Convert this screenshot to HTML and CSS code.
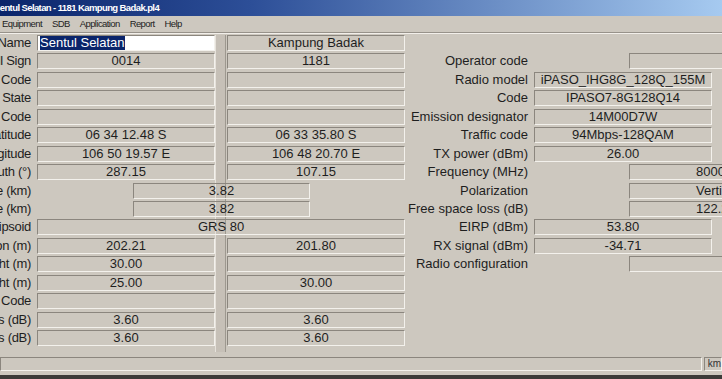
FILE: index.html
```html
<!DOCTYPE html>
<html lang="en">
<head>
    <meta charset="UTF-8">
    <title>Sentul Selatan - 1181 Kampung Badak.pl4</title>
    <link rel="stylesheet" href="styles.css">
</head>
<body>
    <div class="titlebar"><span class="title">Sentul Selatan - 1181 Kampung Badak.pl4</span></div>
    <div class="menubar">
        <span>Equipment</span>
        <span>SDB</span>
        <span>Application</span>
        <span>Report</span>
        <span>Help</span>
    </div>

    <div class="form">
        <!-- row 0 -->
        <div class="lbl"><span>Site Name</span></div>
        <div class="fld f1 edit"><span class="sel">Sentul Selatan</span></div>
        <div class="fld f2">Kampung Badak</div>

        <!-- row 1 -->
        <div class="lbl"><span>Call Sign</span></div>
        <div class="fld f1">0014</div>
        <div class="fld f2">1181</div>
        <div class="rlbl">Operator code</div>
        <div class="fld rf short"></div>

        <!-- row 2 -->
        <div class="lbl"><span>Owner Code</span></div>
        <div class="fld f1"></div>
        <div class="fld f2"></div>
        <div class="rlbl">Radio model</div>
        <div class="fld rf">iPASO_IHG8G_128Q_155M</div>

        <!-- row 3 -->
        <div class="lbl"><span>State</span></div>
        <div class="fld f1"></div>
        <div class="fld f2"></div>
        <div class="rlbl">Code</div>
        <div class="fld rf">IPASO7-8G128Q14</div>

        <!-- row 4 -->
        <div class="lbl"><span>Station Code</span></div>
        <div class="fld f1"></div>
        <div class="fld f2"></div>
        <div class="rlbl">Emission designator</div>
        <div class="fld rf">14M00D7W</div>

        <!-- row 5 -->
        <div class="lbl"><span>Latitude</span></div>
        <div class="fld f1">06 34 12.48 S</div>
        <div class="fld f2">06 33 35.80 S</div>
        <div class="rlbl">Traffic code</div>
        <div class="fld rf">94Mbps-128QAM</div>

        <!-- row 6 -->
        <div class="lbl"><span>Longitude</span></div>
        <div class="fld f1">106 50 19.57 E</div>
        <div class="fld f2">106 48 20.70 E</div>
        <div class="rlbl">TX power (dBm)</div>
        <div class="fld rf">26.00</div>

        <!-- row 7 -->
        <div class="lbl"><span>True azimuth (°)</span></div>
        <div class="fld f1">287.15</div>
        <div class="fld f2">107.15</div>
        <div class="rlbl">Frequency (MHz)</div>
        <div class="fld rf short">8000.00</div>

        <!-- row 8 -->
        <div class="lbl"><span>Path distance (km)</span></div>
        <div class="fld dist">3.82</div>
        <div class="rlbl">Polarization</div>
        <div class="fld rf short">Vertical</div>

        <!-- row 9 -->
        <div class="lbl"><span>Profile distance (km)</span></div>
        <div class="fld dist">3.82</div>
        <div class="rlbl">Free space loss (dB)</div>
        <div class="fld rf short">122.25</div>

        <!-- row 10 -->
        <div class="lbl"><span>Ellipsoid</span></div>
        <div class="fld wide">GRS 80</div>
        <div class="rlbl">EIRP (dBm)</div>
        <div class="fld rf">53.80</div>

        <!-- row 11 -->
        <div class="lbl"><span>Elevation (m)</span></div>
        <div class="fld f1">202.21</div>
        <div class="fld f2">201.80</div>
        <div class="rlbl">RX signal (dBm)</div>
        <div class="fld rf">-34.71</div>

        <!-- row 12 -->
        <div class="lbl"><span>Antenna height (m)</span></div>
        <div class="fld f1">30.00</div>
        <div class="fld f2"></div>
        <div class="rlbl">Radio configuration</div>
        <div class="fld rf short"></div>

        <!-- row 13 -->
        <div class="lbl"><span>Antenna height (m)</span></div>
        <div class="fld f1">25.00</div>
        <div class="fld f2">30.00</div>

        <!-- row 14 -->
        <div class="lbl"><span>Antenna Code</span></div>
        <div class="fld f1"></div>
        <div class="fld f2"></div>

        <!-- row 15 -->
        <div class="lbl"><span>TX line loss (dB)</span></div>
        <div class="fld f1">3.60</div>
        <div class="fld f2">3.60</div>

        <!-- row 16 -->
        <div class="lbl"><span>Misc losses (dB)</span></div>
        <div class="fld f1">3.60</div>
        <div class="fld f2">3.60</div>
    </div>

    <div class="statusbar">
        <div class="panel main-panel"></div>
        <div class="panel unit-panel">km</div>
    </div>
    <div class="bottom-edge"></div>
</body>
</html>
```

FILE: styles.css
```css
html, body {
    margin: 0;
    padding: 0;
}
body {
    width: 722px;
    height: 379px;
    overflow: hidden;
    background: #cdc8bf;
    font-family: "Liberation Sans", Arial, sans-serif;
    color: #1e1e1e;
}
.titlebar {
    height: 16px;
    background: linear-gradient(to right, #0a246a 0%, #2d4f98 35%, #a6caf0 100%);
    color: #fff;
    font-weight: bold;
    font-size: 9.5px;
    letter-spacing: -0.6px;
    line-height: 16px;
    white-space: nowrap;
    overflow: hidden;
}
.title {
    display: inline-block;
    text-indent: -6px;
}
.menubar {
    height: 16px;
    display: flex;
    gap: 10px;
    padding-left: 2px;
    font-size: 9.5px;
    letter-spacing: -0.6px;
    line-height: 16px;
    color: #222;
    border-bottom: 1px solid #97928a;
    box-shadow: 0 1px 0 #f2efea;
}
.form {
    margin-top: 2px;
    padding-bottom: 6px;
    display: grid;
    grid-template-columns: 31px 6px 178px 12px 178px 123px 6px 190px;
    grid-template-rows: repeat(17, 16px);
    row-gap: 2.44px;
    font-size: 13px;
    background: linear-gradient(to right,
        transparent 215px,
        #e6e2db 215px, #e6e2db 216px,
        #c6c0b7 216px, #c6c0b7 225px,
        #9d988f 225px, #9d988f 226px,
        transparent 226px);
}
.lbl {
    grid-column: 1;
    display: flex;
    justify-content: flex-end;
    white-space: nowrap;
    line-height: 16px;
    letter-spacing: -0.3px;
}
.rlbl {
    grid-column: 6;
    text-align: right;
    white-space: nowrap;
    line-height: 16px;
}
.fld {
    box-sizing: border-box;
    height: 16px;
    border-top: 1px solid #8b867e;
    border-left: 1px solid #8b867e;
    border-bottom: 1px solid #f3f1ec;
    border-right: 1px solid #f3f1ec;
    line-height: 14px;
    text-align: center;
    white-space: nowrap;
    overflow: hidden;
}
.f1 {
    grid-column: 3;
}
.f2 {
    grid-column: 5;
}
.dist {
    grid-column: 3 / 6;
    margin: 0 95px 0 96px;
}
.wide {
    grid-column: 3 / 6;
}
.rf {
    grid-column: 8;
    width: 178px;
}
.rf.short {
    width: 130px;
    margin-left: 95px;
    text-align: left;
    padding-left: 66px;
}
.edit {
    background: #fff;
    text-align: left;
    padding-left: 2px;
}
.sel {
    background: #0a246a;
    color: #fff;
}
.statusbar {
    margin-top: 5px;
    height: 14px;
    display: flex;
    gap: 2px;
    font-size: 10px;
    line-height: 12px;
}
.panel {
    box-sizing: border-box;
    height: 14px;
    border-top: 1px solid #8b867e;
    border-left: 1px solid #8b867e;
    border-bottom: 1px solid #f3f1ec;
    border-right: 1px solid #f3f1ec;
}
.main-panel {
    width: 706px;
}
.unit-panel {
    flex: 1;
    padding-left: 3px;
    color: #333;
}
.bottom-edge {
    margin-top: 4px;
    height: 4px;
    background: #3c3b39;
}
```
